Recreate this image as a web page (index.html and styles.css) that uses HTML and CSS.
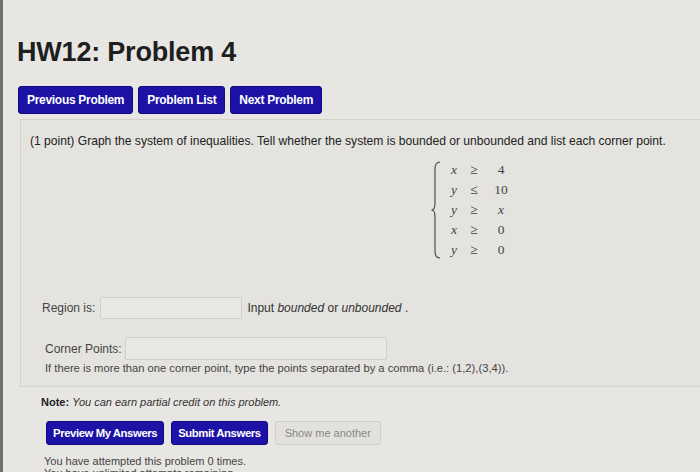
FILE: index.html
```html
<!DOCTYPE html>
<html>
<head>
<meta charset="utf-8">
<link rel="stylesheet" href="styles.css">
</head>
<body>
<div class="screen">
  <h1 class="title">HW12: Problem 4</h1>
  <div class="nav">
    <span class="btn">Previous Problem</span>
    <span class="btn">Problem List</span>
    <span class="btn">Next Problem</span>
  </div>
  <div class="problem">
    <p class="intro">(1 point) Graph the system of inequalities. Tell whether the system is bounded or unbounded and list each corner point.</p>
    <div class="system">
      <svg class="brace" width="10" height="98" viewBox="0 0 10 98"><path d="M9 1 Q4 1 4 8 L4 42 Q4 49 0.5 49 Q4 49 4 56 L4 90 Q4 97 9 97" fill="none" stroke="#444" stroke-width="1.1"/></svg>
      <div class="rows">
        <div class="row"><i>x</i><span class="op">≥</span><span class="val">4</span></div>
        <div class="row"><i>y</i><span class="op">≤</span><span class="val">10</span></div>
        <div class="row"><i>y</i><span class="op">≥</span><span class="val"><i>x</i></span></div>
        <div class="row"><i>x</i><span class="op">≥</span><span class="val">0</span></div>
        <div class="row"><i>y</i><span class="op">≥</span><span class="val">0</span></div>
      </div>
    </div>
    <div class="region">
      <span class="label">Region is:</span>
      <span class="input in-region"></span>
      <span class="hint">Input <i>bounded</i> or <i>unbounded</i> .</span>
    </div>
    <div class="corner">
      <span class="label">Corner Points:</span>
      <span class="input in-corner"></span>
    </div>
    <p class="help">If there is more than one corner point, type the points separated by a comma (i.e.: (1,2),(3,4)).</p>
  </div>
  <p class="note"><b>Note:</b> <i>You can earn partial credit on this problem.</i></p>
  <div class="actions">
    <span class="btn">Preview My Answers</span>
    <span class="btn">Submit Answers</span>
    <span class="btn gray">Show me another</span>
  </div>
  <p class="status">You have attempted this problem 0 times.<br>You have unlimited attempts remaining.</p>
</div>
</body>
</html>
```
FILE: styles.css
```css
html, body {
  margin: 0;
  padding: 0;
  width: 700px;
  height: 472px;
  overflow: hidden;
  background: #e7e6e2;
}
.screen {
  border-left: 3px solid #6f6e6b;
  height: 472px;
  box-sizing: border-box;
  padding: 37px 0 0 14px;
  font-family: "Liberation Sans", Arial, sans-serif;
  color: #2a2a2a;
  overflow: hidden;
}
.title {
  margin: 0;
  font-size: 27px;
  font-weight: bold;
  color: #1e1e1e;
  letter-spacing: -0.2px;
  line-height: 30px;
}
.nav {
  display: flex;
  gap: 5px;
  margin-top: 19px;
  margin-left: 1px;
}
.btn {
  display: inline-block;
  background: #1c12a6;
  color: #fff;
  font-size: 12px;
  font-weight: bold;
  letter-spacing: -0.3px;
  border-radius: 3px;
  border: 1px solid #120a80;
  padding: 0 8px;
  height: 26px;
  line-height: 26px;
  white-space: nowrap;
}
.problem {
  margin-top: 5px;
  margin-left: 3px;
  width: 720px;
  height: 268px;
  box-sizing: border-box;
  border: 1px solid #d3d2cd;
  border-right: none;
  background: #e4e3df;
  padding: 14px 0 0 9px;
  font-size: 12.1px;
}
.intro {
  margin: 0;
  color: #222;
}
.system {
  display: flex;
  align-items: center;
  margin-left: 401px;
  margin-top: 12px;
  font-family: "Liberation Serif", "Times New Roman", serif;
  font-size: 13.5px;
  color: #444;
}
.brace { display: block; }
.rows { margin-left: 5px; }
.row {
  display: grid;
  grid-template-columns: 16px 24px 30px;
  height: 20px;
  line-height: 20px;
}
.row i { text-align: center; }
.op { text-align: center; }
.val { text-align: center; }
.region {
  display: flex;
  align-items: center;
  margin-top: 37px;
  margin-left: 12px;
  color: #444;
  font-size: 12px;
}
.label { color: #444; }
.input {
  display: inline-block;
  height: 22px;
  box-sizing: border-box;
  border: 1px solid #cfceca;
  background: #e9e8e5;
  border-radius: 2px;
}
.in-region { width: 142px; margin-left: 5px; }
.hint { margin-left: 5px; color: #333; }
.corner {
  display: flex;
  align-items: center;
  margin-top: 18px;
  margin-left: 15px;
  font-size: 12px;
}
.in-corner { width: 262px; margin-left: 3px; height: 23px; }
.help {
  margin: 2px 0 0 15px;
  font-size: 11.2px;
  color: #444;
}
.note {
  margin: 9px 0 0 24px;
  font-size: 11px;
  color: #333;
}
.note b { color: #222; }
.actions {
  display: flex;
  gap: 7px;
  margin: 13px 0 0 29px;
}
.actions .btn {
  height: 22px;
  line-height: 22px;
  padding: 0 6px;
  font-size: 11.3px;
  letter-spacing: -0.4px;
}
.actions .btn.gray {
  background: #e2e1dd;
  color: #888;
  font-weight: normal;
  border: 1px solid #cfceca;
  letter-spacing: 0;
  font-size: 11px;
  padding: 0 9px;
}
.status {
  margin: 10px 0 0 27px;
  font-size: 11px;
  color: #444;
  line-height: 12px;
}
```
